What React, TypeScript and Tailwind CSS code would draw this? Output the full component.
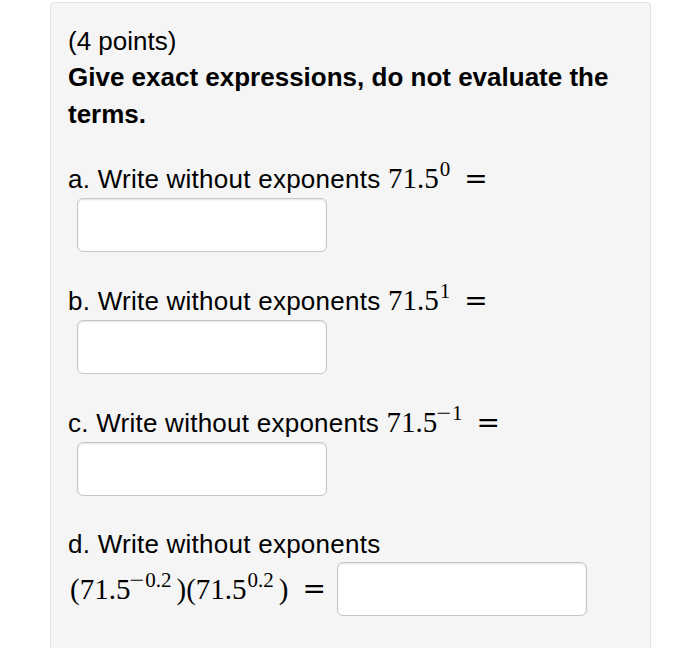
import React from "react";

function Pow({ base, sup }: { base: string; sup: React.ReactNode }) {
  return (
    <span className="font-['Liberation_Serif','Times_New_Roman',serif] text-[29px] leading-none tracking-normal">
      {base}
      <span className="ml-px text-[21px] leading-[0] align-[12px]">{sup}</span>
    </span>
  );
}

function Minus() {
  return <span className="inline-block scale-x-125 pr-[2px]">−</span>;
}

function Eq({ className = "" }: { className?: string }) {
  return (
    <span className={"font-['DejaVu_Serif',serif] text-[28px] leading-none " + className}>=</span>
  );
}

function Box({ className = "" }: { className?: string }) {
  return (
    <input
      type="text"
      className={
        "block h-[54px] w-[250px] rounded-[6px] border border-[#c6c6c6] bg-white shadow-[inset_0_1px_2px_rgba(0,0,0,0.12)] outline-none " +
        className
      }
    />
  );
}

export default function App() {
  return (
    <div className="h-[648px] w-[700px] overflow-hidden bg-white">
      <div className="ml-[50px] mt-[2px] h-[720px] w-[601px] rounded-t-[4px] border border-[#e2e2e2] bg-[#f5f5f5] pl-[17px] pr-[17px] pt-[23px] font-['Liberation_Sans',Arial,sans-serif] text-black">
        <p className="text-[26px] leading-[30px]">(4 points)</p>
        <p className="mt-[3px] text-[26px] font-bold leading-[37px]">
          Give exact expressions, do not evaluate the terms.
        </p>

        <div className="mt-[28px] text-[26px] leading-[36px] tracking-[0.25px]">
          a. Write without exponents <Pow base="71.5" sup="0" />
          <Eq className="ml-[14px]" />
        </div>
        <Box className="ml-[9px] mt-px" />

        <div className="mt-[31px] text-[26px] leading-[36px] tracking-[0.25px]">
          b. Write without exponents <Pow base="71.5" sup="1" />
          <Eq className="ml-[14px]" />
        </div>
        <Box className="ml-[9px] mt-px" />

        <div className="mt-[31px] text-[26px] leading-[36px] tracking-[0.25px]">
          c. Write without exponents{" "}
          <Pow
            base="71.5"
            sup={
              <>
                <Minus />1
              </>
            }
          />
          <Eq className="ml-[14px]" />
        </div>
        <Box className="ml-[9px] mt-px" />

        <div className="mt-[31px] text-[26px] leading-[35px] tracking-[0.25px]">
          d. Write without exponents
        </div>
        <div className="flex items-center">
          <span className="ml-[2px] font-['Liberation_Serif','Times_New_Roman',serif] text-[29px] leading-none">
            (
            <Pow
              base="71.5"
              sup={
                <>
                  <Minus />0.2
                </>
              }
            />
            <span className="ml-[5px]">)(</span>
            <Pow base="71.5" sup="0.2" />
            <span className="ml-[5px]">)</span>
          </span>
          <Eq className="ml-[14px]" />
          <Box className="ml-[11px]" />
        </div>
      </div>
    </div>
  );
}
